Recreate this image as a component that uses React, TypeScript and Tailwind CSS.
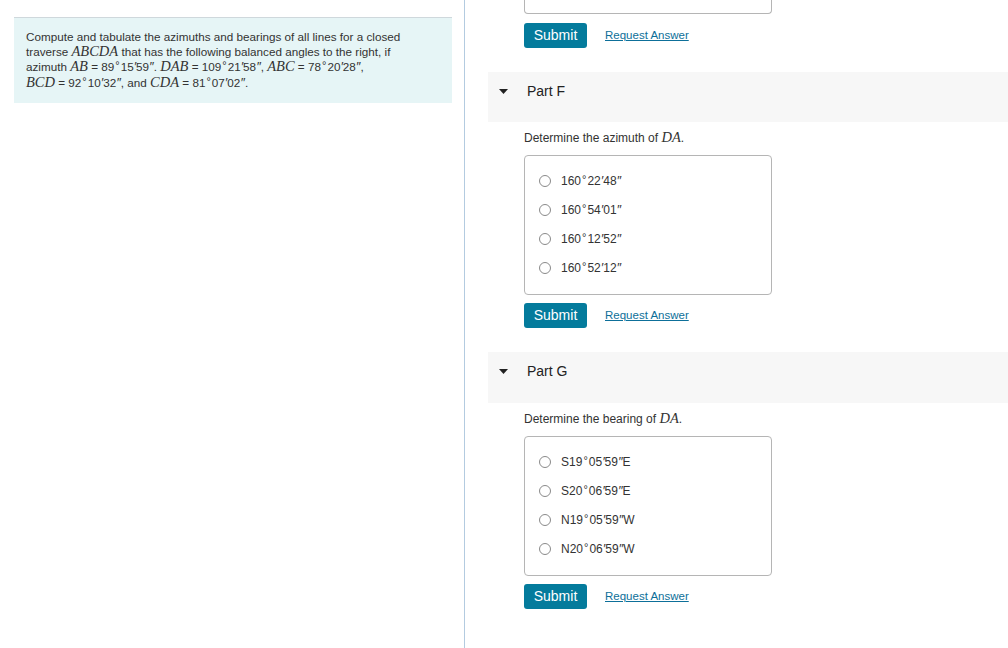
import React from "react";

const M = ({ children }: { children: React.ReactNode }) => (
  <span className="italic text-[14.5px] leading-none" style={{ fontFamily: '"Liberation Serif", "DejaVu Serif", serif' }}>
    {children}
  </span>
);

const Deg = () => <span className="text-[11px] relative -top-[2px] mx-[1px]">°</span>;

const P = ({ c }: { c: string }) => (
  <span className="text-[13px] leading-none italic" style={{ fontFamily: '"Liberation Sans", sans-serif' }}>
    {c}
  </span>
);

const Ang = ({ d, m, s, pre, post }: { d: string; m: string; s: string; pre?: string; post?: string }) => (
  <span>
    {pre}
    {d}
    <Deg />
    {m}
    <P c="′" />
    {s}
    <P c="″" />
    {post}
  </span>
);

const SubmitRow = () => (
  <div className="flex items-center">
    <button className="h-[25px] w-[63px] rounded-[3px] bg-[#047b9c] text-white text-[14px] leading-none flex items-center justify-center pb-[2px]">
      Submit
    </button>
    <a className="ml-[18px] text-[11.5px] text-[#0d6f99] underline cursor-pointer">Request Answer</a>
  </div>
);

const PartHeader = ({ label, h }: { label: string; h: string }) => (
  <div className={`bg-[#f7f7f7] ${h} pl-[11px] pt-[10px] flex items-start`}>
    <div className="h-[18px] flex items-center">
      <svg width="9" height="5" viewBox="0 0 9 5">
        <polygon points="0,0 9,0 4.5,5" fill="#222" />
      </svg>
    </div>
    <span className="ml-[19px] text-[14px] leading-[18px] text-[#222]">{label}</span>
  </div>
);

const Radio = ({ children }: { children: React.ReactNode }) => (
  <div className="h-[29px] flex items-center">
    <span className="w-[12px] h-[12px] rounded-full border border-[#8a8a8a] bg-white shrink-0" />
    <span className="ml-[10px] text-[12px] text-[#333]">{children}</span>
  </div>
);

const Options = ({ items }: { items: React.ReactNode[] }) => (
  <div className="w-[248px] h-[140px] border border-[#b5b5b5] rounded-[4px] pl-[14px] pt-[10px]">
    {items.map((it, i) => (
      <Radio key={i}>{it}</Radio>
    ))}
  </div>
);

export default function App() {
  return (
    <div
      className="w-[1008px] h-[648px] bg-white flex text-[#333] overflow-hidden"
      style={{ fontFamily: '"Liberation Sans", Arial, sans-serif' }}
    >
      <div className="w-[465px] h-full border-r border-[#b3cbe0] shrink-0 pt-[17px] pl-[14px] pr-[12px]">
        <div className="bg-[#e6f5f6] border-t border-[#cfd8dc] pl-[12px] pr-[8px] pt-[11px] pb-[12px] text-[11.7px] leading-[15px] text-[#333]">
          Compute and tabulate the azimuths and bearings of all lines for a closed
          <br />
          traverse <M>ABCDA</M> that has the following balanced angles to the right, if
          <br />
          azimuth <M>AB</M> = <Ang d="89" m="15" s="59" />. <M>DAB</M> = <Ang d="109" m="21" s="58" />, <M>ABC</M> ={" "}
          <Ang d="78" m="20" s="28" />,
          <br />
          <M>BCD</M> = <Ang d="92" m="10" s="32" />, and <M>CDA</M> = <Ang d="81" m="07" s="02" />.
        </div>
      </div>

      <div className="flex-1 pl-[23px] flex flex-col">
        <div className="pl-[36px]">
          <div className="w-[248px] h-[14px] border border-t-0 border-[#b5b5b5] rounded-b-[4px]" />
          <div className="mt-[9px]">
            <SubmitRow />
          </div>
        </div>

        <div className="mt-[24px]">
          <PartHeader label="Part F" h="h-[50px]" />
        </div>
        <div className="pl-[36px]">
          <div className="mt-[8px] text-[12px] leading-[16px]">
            Determine the azimuth of <M>DA</M>.
          </div>
          <div className="mt-[9px]">
            <Options
              items={[
                <Ang d="160" m="22" s="48" />,
                <Ang d="160" m="54" s="01" />,
                <Ang d="160" m="12" s="52" />,
                <Ang d="160" m="52" s="12" />,
              ]}
            />
          </div>
          <div className="mt-[8px]">
            <SubmitRow />
          </div>
        </div>

        <div className="mt-[24px]">
          <PartHeader label="Part G" h="h-[51px]" />
        </div>
        <div className="pl-[36px]">
          <div className="mt-[8px] text-[12px] leading-[16px]">
            Determine the bearing of <M>DA</M>.
          </div>
          <div className="mt-[9px]">
            <Options
              items={[
                <Ang pre="S" d="19" m="05" s="59" post="E" />,
                <Ang pre="S" d="20" m="06" s="59" post="E" />,
                <Ang pre="N" d="19" m="05" s="59" post="W" />,
                <Ang pre="N" d="20" m="06" s="59" post="W" />,
              ]}
            />
          </div>
          <div className="mt-[8px]">
            <SubmitRow />
          </div>
        </div>
      </div>
    </div>
  );
}
